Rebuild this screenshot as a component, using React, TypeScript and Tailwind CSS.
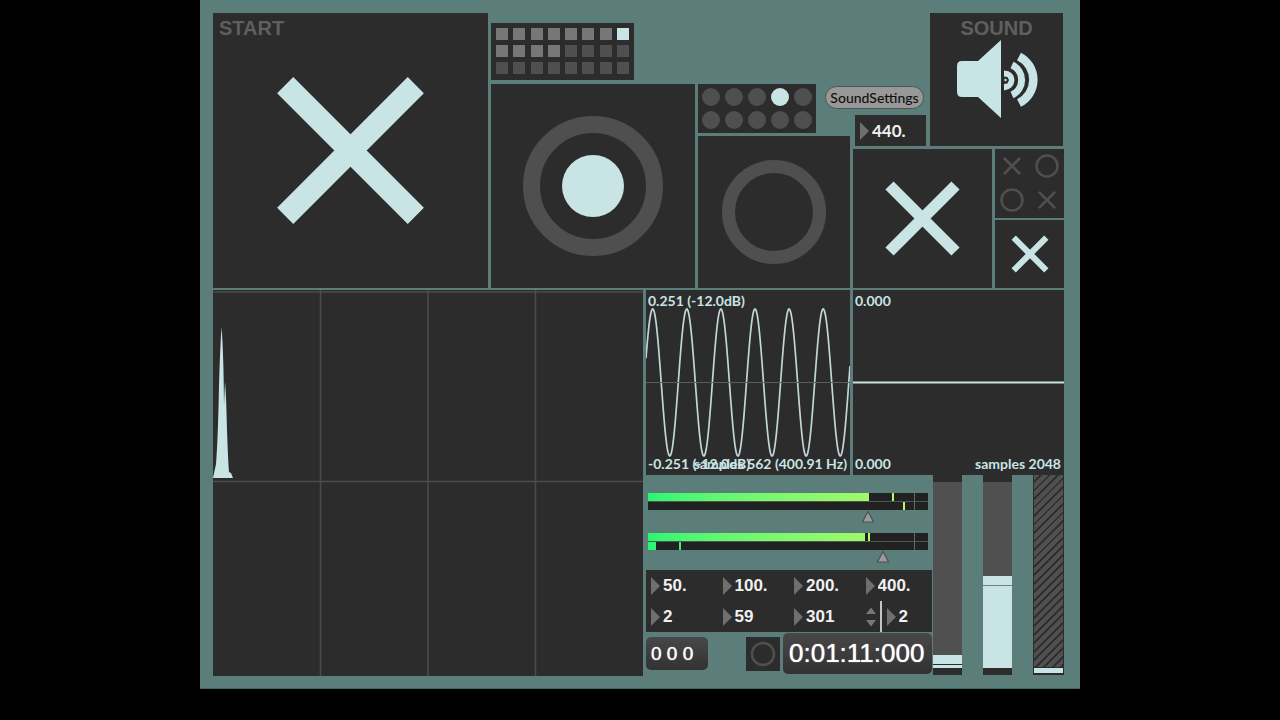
import type { ReactNode } from "react";

const sans = "font-['Liberation_Sans',Arial,sans-serif]";
const lato = "font-[Lato,sans-serif]";

function Cross({ size, width, className }: { size: number; width: number; className: string }) {
  const a = (100 - size) / 2;
  const b = 100 - a;
  return (
    <svg viewBox="0 0 100 100" className={className} fill="none" stroke="currentColor" strokeWidth={width} aria-hidden="true">
      <path d={`M${a} ${a}L${b} ${b}M${b} ${a}L${a} ${b}`} />
    </svg>
  );
}

function Toggle({ label, className, children }: { label: string; className: string; children: ReactNode }) {
  return (
    <button type="button" aria-label={label} className={`block bg-[#2c2c2c] ${className}`}>
      {children}
    </button>
  );
}

function StepGrid() {
  const cells = Array.from({ length: 24 }, (_, i) =>
    i === 7 ? "bg-[#c8e4e4]" : i < 12 ? "bg-[#777777]" : "bg-[#4f4f4f]",
  );
  return (
    <div className="grid w-[143px] grid-cols-8 gap-[5px] bg-[#2c2c2c] px-[5px] pt-[5px] pb-[6px]">
      {cells.map((c, i) => (
        <button key={i} type="button" aria-label={`Step ${i + 1}`} className={`h-3 w-3 ${c}`} />
      ))}
    </div>
  );
}

function DotGrid() {
  return (
    <div className="grid w-[118px] grid-cols-5 gap-[5px] bg-[#2c2c2c] p-1">
      {Array.from({ length: 10 }, (_, i) => (
        <button
          key={i}
          type="button"
          aria-label={`Preset ${i + 1}`}
          className={`h-[18px] w-[18px] rounded-full ${i === 3 ? "bg-[#c8e4e4]" : "bg-[#4f4f4f]"}`}
        />
      ))}
    </div>
  );
}

function NumberBox({ label, value, font }: { label: string; value: string; font: string }) {
  return (
    <label className="flex h-[31px] min-w-0 items-center gap-[3px] pl-[5px]">
      <svg viewBox="0 0 9 18" className="h-[18px] w-[9px] shrink-0" fill="#6f6f6f" aria-hidden="true">
        <path d="M0 0L9 9L0 18Z" />
      </svg>
      <input
        aria-label={label}
        defaultValue={value}
        className={`w-full min-w-0 bg-transparent text-[17px] leading-5 font-bold text-[#f0f0f0] outline-none ${font}`}
      />
    </label>
  );
}

function Speaker() {
  return (
    <svg viewBox="0 0 133 133" className="w-full" fill="#c8e4e4" aria-hidden="true">
      <path d="M32 48H48L71 27V105L48 84H32Q27 84 27 79V53Q27 48 32 48Z" />
      <g fill="none" stroke="#c8e4e4">
        <path d="M89 43.500A26 26 0 0 1 89 90" strokeWidth="8.500" />
        <path d="M82 52A16.500 16.500 0 0 1 82 82" strokeWidth="7" />
      </g>
      <path d="M74 57.500Q84 58 84.500 67Q84 76 74 77.500V71L77.500 70.500L79 67L77.500 64L74 63.500Z" />
      <circle cx="75.500" cy="67" r="1.200" />
    </svg>
  );
}

function Spectrum() {
  return (
    <svg viewBox="0 0 430 386" preserveAspectRatio="none" className="h-full w-full bg-[#2c2c2c]" role="img" aria-label="Spectrum">
      <path d="M0 2H430M0 191.500H430M107.500 0V386M215 0V386M322.500 0V386" stroke="#4b4b4b" strokeWidth="1.500" />
      <path
        d="M0 188L3 174Q5 148 6 95Q7 60 8.500 37Q10.500 60 11 115L12 92Q13 100 14 140Q15 170 16 182L18 183L20 188Z"
        fill="#c8e4e4"
      />
    </svg>
  );
}

const wave = Array.from({ length: 409 }, (_, i) => {
  const x = i / 2;
  const y = 92.5 - 73.5 * Math.cos(((x - 6.7) / 34.1) * 2 * Math.PI);
  return `${i ? "L" : "M"}${x} ${y.toFixed(1)}`;
}).join("");

function Scope({ top, bottom, samples, children }: {
  top: string; bottom: string; samples: string; children: ReactNode;
}) {
  return (
    <div className={`relative h-[185px] bg-[#2c2c2c] text-[14px] leading-[18px] font-bold whitespace-nowrap text-[#c8e4e4] ${lato}`}>
      {children}
      <span className="absolute top-[2px] left-[2px]">{top}</span>
      <span className="absolute bottom-[2px] left-[2px]">{bottom}</span>
      <span className="absolute right-[3px] bottom-[2px]">{samples}</span>
    </div>
  );
}

function Meter({ label, left, leftPeak, right, rightPeak, gain }: {
  label: string; left: number; leftPeak: number; right: number; rightPeak: number; gain: number;
}) {
  const pct = (v: number) => `${(v / 280) * 100}%`;
  return (
    <div className="relative h-[30px]">
      <div className="relative flex h-[17px] flex-col gap-px bg-[#4c5554]">
        {[[left, leftPeak], [right, rightPeak]].map(([level, peak], i) => (
          <div key={i} className="relative h-2 bg-[#212121]">
            <div className="h-full overflow-hidden" style={{ width: pct(level) }}>
              <div className="h-full w-[280px] bg-linear-to-r from-[#27f772] to-[#b4f768]" />
            </div>
            <div
              className={`absolute top-0 h-full w-[2px] ${peak < 60 ? "bg-[#4be874]" : "bg-[#b8f76a]"}`}
              style={{ left: pct(peak) }}
            />
          </div>
        ))}
        <div className="absolute top-0 left-[95%] h-full w-px bg-[#5c6b69]" />
      </div>
      <svg viewBox="0 0 14 13" className="absolute top-[17px] h-[13px] w-[14px] -translate-x-1/2" style={{ left: pct(gain) }} aria-hidden="true">
        <path d="M7 1.500L12.500 12H1.500Z" fill="#9c9c9c" stroke="#505050" strokeWidth="1.200" />
      </svg>
      <input type="range" aria-label={label} min={0} max={280} defaultValue={gain} className="absolute inset-0 h-full w-full opacity-0" />
    </div>
  );
}

function Fader({ label, value, className, children }: { label: string; value: number; className: string; children: ReactNode }) {
  return (
    <div className={`relative flex h-[200px] flex-col ${className}`}>
      {children}
      <input
        type="range"
        aria-label={label}
        defaultValue={value}
        className="absolute inset-0 h-full w-full opacity-0 [direction:rtl] [writing-mode:vertical-lr]"
      />
    </div>
  );
}

export default function App() {
  return (
    <div className={`min-h-screen bg-black ${sans}`}>
      <main className="mx-auto flex w-full max-w-[880px] flex-col gap-[2px] border-b border-[#456461] bg-[#5b7e7a] pt-[13px] pr-4 pb-3 pl-[13px]">
        <section className="grid grid-cols-[275fr_204fr_152fr_211fr] items-end gap-[3px]">
          <button type="button" className="relative block aspect-square bg-[#2c2c2c]">
            <span className="absolute top-[3px] left-[6px] text-[20px] leading-6 font-bold text-[#5f5f5f]">START</span>
            <Cross size={47.5} width={8.3} className="h-full w-full text-[#c8e4e4]" />
          </button>

          <div className="flex flex-col gap-1">
            <StepGrid />
            <Toggle label="Blink" className="aspect-square w-full">
              <svg viewBox="0 0 204 204" className="w-full" aria-hidden="true">
                <circle cx="102" cy="102" r="61.500" fill="none" stroke="#4f4f4f" strokeWidth="17" />
                <circle cx="102" cy="102" r="31" fill="#c8e4e4" />
              </svg>
            </Toggle>
          </div>

          <div className="flex flex-col gap-[3px]">
            <DotGrid />
            <Toggle label="Bang" className="aspect-square w-full">
              <svg viewBox="0 0 152 152" className="w-full" aria-hidden="true">
                <circle cx="76" cy="76" r="45.500" fill="none" stroke="#4f4f4f" strokeWidth="13" />
              </svg>
            </Toggle>
          </div>

          <div className="flex min-w-0 flex-col gap-[3px]">
            <div className="grid grid-cols-[71fr_133fr] items-end gap-1 pr-px pl-[2px]">
              <div className="flex min-w-0 flex-col items-end gap-[6px]">
                <button type="button" className={`mr-[2px] h-[23px] w-[99px] rounded-full border border-[#4c5554] bg-[#989898] text-[14px] leading-5 font-medium whitespace-nowrap text-[#101010] ${lato}`}>
                  SoundSettings
                </button>
                <div className="w-full bg-[#2c2c2c]">
                  <NumberBox label="Frequency" value="440." font={lato} />
                </div>
              </div>
              <button type="button" className="relative block aspect-square bg-[#2c2c2c]">
                <span className="absolute inset-x-0 top-[3px] text-center text-[20px] leading-6 font-bold text-[#5f5f5f]">SOUND</span>
                <Speaker />
              </button>
            </div>
            <div className="grid grid-cols-[139fr_69fr] gap-[3px]">
              <Toggle label="Toggle A" className="aspect-square">
                <Cross size={47.5} width={8.3} className="h-full w-full text-[#c8e4e4]" />
              </Toggle>
              <div className="flex flex-col gap-[2px]">
                <div className="grid flex-1 grid-cols-2 bg-[#2c2c2c] text-[#4f4f4f]">
                  {["x", "o", "o", "x"].map((kind, i) => (
                    <button key={i} type="button" aria-label={`Matrix ${i + 1}`} className="flex items-center justify-center">
                      {kind === "x" ? (
                        <Cross size={48} width={8} className="h-[34px] w-[34px]" />
                      ) : (
                        <svg viewBox="0 0 34 34" className="h-[34px] w-[34px]" fill="none" stroke="currentColor" strokeWidth="2.500" aria-hidden="true">
                          <circle cx="17" cy="17" r="10.500" />
                        </svg>
                      )}
                    </button>
                  ))}
                </div>
                <Toggle label="Toggle B" className="flex-1">
                  <Cross size={48} width={9} className="mx-auto h-[68px] w-[68px] text-[#c8e4e4]" />
                </Toggle>
              </div>
            </div>
          </div>
        </section>

        <section className="grid grid-cols-[430fr_418fr] gap-[3px]">
          <div className="relative min-h-[386px]">
            <div className="absolute inset-0"><Spectrum /></div>
          </div>

          <div className="flex min-w-0 flex-col">
            <div className="grid grid-cols-[204fr_211fr] gap-[3px]">
              <Scope top="0.251 (-12.0dB)" bottom="-0.251 (-12.0dB)" samples="samples 562 (400.91 Hz)">
                <svg viewBox="0 0 204 185" preserveAspectRatio="none" className="h-full w-full" fill="none" aria-hidden="true">
                  <path d={wave} stroke="#c3d6d6" strokeWidth="1.700" />
                  <path d="M0 92.500H204" stroke="#5c5c5c" />
                </svg>
              </Scope>
              <Scope top="0.000" bottom="0.000" samples="samples 2048">
                <svg viewBox="0 0 211 185" preserveAspectRatio="none" className="h-full w-full" fill="none" aria-hidden="true">
                  <path d="M0 92.500H211" stroke="#c8e4e4" strokeWidth="2" />
                </svg>
              </Scope>
            </div>

            <div className="grid grid-cols-[286fr_131fr] gap-px">
              <div className="flex min-w-0 flex-col">
                <div className="flex flex-col gap-[10px] pt-[18px] pr-1 pb-[7px] pl-[2px]">
                  <Meter label="Gain left" left={221} leftPeak={244} right={0} rightPeak={255} gain={220} />
                  <Meter label="Gain right" left={217} leftPeak={220} right={8} rightPeak={31} gain={235} />
                </div>
                <div className="grid grid-cols-4 bg-[#2c2c2c]">
                  <NumberBox label="Left 1" value="50." font={sans} />
                  <NumberBox label="Left 2" value="100." font={sans} />
                  <NumberBox label="Left 3" value="200." font={sans} />
                  <NumberBox label="Left 4" value="400." font={sans} />
                  <NumberBox label="Bars" value="2" font={sans} />
                  <NumberBox label="Beats" value="59" font={sans} />
                  <NumberBox label="Units" value="301" font={sans} />
                  <div className="flex min-w-0 items-center pl-[5px]">
                    <svg viewBox="0 0 10 20" className="h-5 w-[10px] shrink-0" fill="#777777" aria-hidden="true">
                      <path d="M0 7L5 0.500L10 7ZM0 13L5 19.500L10 13Z" />
                    </svg>
                    <div className="ml-1 h-full w-[2px] shrink-0 bg-[#c4c4c4]" />
                    <NumberBox label="Voices" value="2" font={sans} />
                  </div>
                </div>
                <div className="flex items-start pt-px">
                  <output className="mt-1 h-[33px] w-[62px] rounded-[5px] bg-linear-to-b from-[#484848] to-[#323232] pl-[5px] text-[19px] leading-[33px] text-white text-shadow-[0_0_1px_#ffffff]">
                    0 0 0
                  </output>
                  <Toggle label="Reset" className="mt-1 ml-auto h-[34px] w-[34px]">
                    <svg viewBox="0 0 34 34" className="h-full w-full" fill="none" aria-hidden="true">
                      <circle cx="17" cy="17" r="11" stroke="#4f4f4f" strokeWidth="2.500" />
                    </svg>
                  </Toggle>
                  <output className="ml-[3px] h-[41px] w-[149px] rounded-[5px] bg-linear-to-b from-[#484848] to-[#323232] pl-[6px] text-[26px] leading-10 whitespace-nowrap text-white text-shadow-[0_0_1px_#ffffff]">
                    0:01:11:000
                  </output>
                </div>
              </div>

              <div className="flex justify-between">
                <Fader label="Level 1" value={7} className="w-[29px] bg-[#505050]">
                  <div className="h-[7px] bg-[#2c2c2c]" />
                  <div className="flex-1" />
                  <div className="h-[9px] bg-[#c8e4e4]" />
                  <div className="h-px bg-[#2c2c2c]" />
                  <div className="h-[3px] bg-[#c8e4e4]" />
                  <div className="h-[7px] bg-[#2c2c2c]" />
                </Fader>
                <Fader label="Level 2" value={48} className="w-[29px] bg-[#505050]">
                  <div className="h-[7px] bg-[#2c2c2c]" />
                  <div className="flex-1" />
                  <div className="h-[9px] bg-[#c8e4e4]" />
                  <div className="h-px bg-[#6e8080]" />
                  <div className="h-[82px] bg-[#c8e4e4]" />
                  <div className="h-[7px] bg-[#2c2c2c]" />
                </Fader>
                <Fader label="Level 3" value={2} className="w-[31px] border-x border-b-2 border-[#2c2c2c] bg-[#2c2c2c]">
                  <div className="flex-1 bg-[repeating-linear-gradient(135deg,#505050_0px,#505050_4px,#303030_4px,#303030_6px)]" />
                  <div className="mt-px h-[5px] bg-[#c8e4e4]" />
                </Fader>
              </div>
            </div>
          </div>
        </section>
      </main>
    </div>
  );
}
